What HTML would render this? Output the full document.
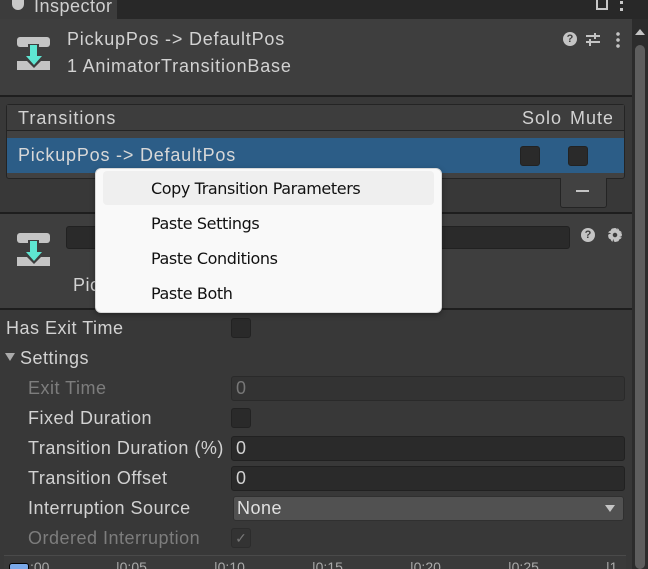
<!DOCTYPE html>
<html><head><style>
*{margin:0;padding:0;box-sizing:border-box}
html,body{width:648px;height:569px;overflow:hidden}
body{background:#383838;font-family:"Liberation Sans",sans-serif;color:#d2d2d2;position:relative;font-size:18px;letter-spacing:0.5px}
.a{position:absolute}
.t{position:absolute;white-space:nowrap}
.cb{position:absolute;width:20px;height:20px;background:#2a2a2a;border:1px solid #222;border-radius:3px}
.fld{position:absolute;background:#2a2a2a;border:1px solid #212121;border-radius:3px;height:25px}
.mi{position:absolute;left:151px;color:#111;font-size:16px;font-family:"DejaVu Sans","Liberation Sans",sans-serif;letter-spacing:-0.4px}
</style></head><body>
<div class="a" style="left:0;top:0;width:648px;height:19px;background:#282828"></div>
<div class="a" style="left:0;top:0;width:117px;height:19px;background:#3c3c3c"></div>
<div class="a" style="left:12px;top:0;width:12px;height:10px;background:#c8c8c8;border-radius:0 0 6px 6px"></div>
<div class="t" style="left:34px;top:-4px;font-size:18px;color:#d0d0d0">Inspector</div>
<div class="a" style="left:596px;top:0;width:12px;height:10px;border:2px solid #c8c8c8;border-top:none"></div>
<div class="a" style="left:620px;top:1px;width:3px;height:10px;border-top:3px solid #c8c8c8;border-bottom:3px solid #c8c8c8"></div>
<div class="a" style="left:0;top:19px;width:634px;height:78px;background:#3e3e3e;border-bottom:2px solid #1e1e1e"></div>
<svg class="a" style="left:15px;top:35px" width="38" height="38"><rect x="2" y="2" width="33" height="10" rx="3" fill="#c4c4c4"/><path d="M2 26h10l7 7 7-7h9v9H2z" fill="#c4c4c4"/><path d="M13 9h11v11h5l-10 12-10-12h4z" fill="#3e3e3e"/><path d="M15 10h7v11h5l-8 9-8-9h4z" fill="#5ee6d2"/></svg>
<div class="t" style="left:67px;top:29px;font-size:18px;letter-spacing:0.8px">PickupPos -&gt; DefaultPos</div>
<div class="t" style="left:67px;top:56px;font-size:18px;letter-spacing:0.8px">1 AnimatorTransitionBase</div>
<div class="a" style="left:563px;top:32px;width:14px;height:14px;border-radius:50%;background:#c4c4c4;color:#3e3e3e;font-size:11px;font-weight:bold;text-align:center;line-height:14px;letter-spacing:0">?</div>
<svg class="a" style="left:585px;top:31px" width="16" height="16"><path d="M1 5h14M1 11h14M10 2v6M5 8v7" stroke="#c4c4c4" stroke-width="2"/></svg>
<div class="a" style="left:616px;top:31px;width:4px;height:17px;background:radial-gradient(circle,#c4c4c4 1.6px,transparent 2px) 0 0/4px 6px"></div>
<div class="a" style="left:632px;top:19px;width:16px;height:550px;background:#2c2c2c"></div>
<div class="a" style="left:635px;top:45px;width:10px;height:524px;background:#5e5e5e;border-radius:5px"></div>
<div class="a" style="left:635px;top:29px;width:0;height:0;border-left:5px solid transparent;border-right:5px solid transparent;border-bottom:6px solid #c4c4c4"></div>
<div class="a" style="left:6px;top:104px;width:619px;height:75px;background:#414141;border:1px solid #242424;border-radius:3px"></div>
<div class="a" style="left:7px;top:105px;width:617px;height:26px;background:#3d3d3d;border-bottom:1px solid #232323"></div>
<div class="t" style="left:18px;top:108px;letter-spacing:1px">Transitions</div>
<div class="t" style="left:522px;top:108px;letter-spacing:1px">Solo</div>
<div class="t" style="left:570px;top:108px;width:42px;overflow:hidden;letter-spacing:1px">Mute</div>
<div class="a" style="left:7px;top:138px;width:617px;height:35px;background:#2c5d87"></div>
<div class="t" style="left:18px;top:145px;color:#d8d8d8;letter-spacing:0.8px">PickupPos -&gt; DefaultPos</div>
<div class="cb" style="left:520px;top:146px"></div>
<div class="cb" style="left:568px;top:146px"></div>
<div class="a" style="left:560px;top:178px;width:47px;height:30px;background:#414141;border:1px solid #242424;border-top:none;border-radius:0 0 3px 3px"></div>
<div class="a" style="left:576px;top:190px;width:13px;height:2px;background:#c4c4c4"></div>
<div class="a" style="left:0;top:212px;width:632px;height:2px;background:#1e1e1e"></div>
<div class="a" style="left:0;top:214px;width:632px;height:96px;background:#3e3e3e;border-bottom:2px solid #1e1e1e"></div>
<svg class="a" style="left:15px;top:231px" width="38" height="38"><rect x="2" y="2" width="33" height="10" rx="3" fill="#c4c4c4"/><path d="M2 26h10l7 7 7-7h9v9H2z" fill="#c4c4c4"/><path d="M13 9h11v11h5l-10 12-10-12h4z" fill="#3e3e3e"/><path d="M15 10h7v11h5l-8 9-8-9h4z" fill="#5ee6d2"/></svg>
<div class="fld" style="left:66px;top:226px;width:504px;height:23px"></div>
<div class="a" style="left:581px;top:228px;width:14px;height:14px;border-radius:50%;background:#c4c4c4;color:#3e3e3e;font-size:11px;font-weight:bold;text-align:center;line-height:14px;letter-spacing:0">?</div>
<div class="a" style="left:608px;top:228px;width:14px;height:14px;border-radius:50%;border:4px dotted #c4c4c4;background:radial-gradient(circle,#3e3e3e 2px,#c4c4c4 2.5px)"></div>
<div class="t" style="left:73px;top:275px">Pic</div>
<div class="t" style="left:6px;top:318px">Has Exit Time</div>
<div class="cb" style="left:231px;top:318px"></div>
<div class="a" style="left:5px;top:353px;width:0;height:0;border-left:5px solid transparent;border-right:5px solid transparent;border-top:8px solid #aaa"></div>
<div class="t" style="left:20px;top:348px">Settings</div>
<div class="t" style="left:28px;top:378px;color:#7d7d7d">Exit Time</div>
<div class="fld" style="left:231px;top:376px;width:394px;background:#333;border-color:#2a2a2a"></div>
<div class="t" style="left:236px;top:378px;color:#777">0</div>
<div class="t" style="left:28px;top:408px">Fixed Duration</div>
<div class="cb" style="left:231px;top:408px"></div>
<div class="t" style="left:28px;top:438px;width:198px;overflow:hidden">Transition Duration (%)</div>
<div class="fld" style="left:231px;top:436px;width:394px"></div>
<div class="t" style="left:236px;top:438px">0</div>
<div class="t" style="left:28px;top:468px">Transition Offset</div>
<div class="fld" style="left:231px;top:466px;width:394px"></div>
<div class="t" style="left:236px;top:468px">0</div>
<div class="t" style="left:28px;top:498px">Interruption Source</div>
<div class="a" style="left:233px;top:496px;width:391px;height:25px;background:#515151;border:1px solid #303030;border-radius:3px"></div>
<div class="t" style="left:237px;top:498px;color:#e0e0e0">None</div>
<div class="a" style="left:605px;top:505px;width:0;height:0;border-left:5px solid transparent;border-right:5px solid transparent;border-top:7px solid #c4c4c4"></div>
<div class="t" style="left:28px;top:528px;color:#7d7d7d">Ordered Interruption</div>
<div class="cb" style="left:231px;top:528px;background:#333;border-color:#2c2c2c;color:#777;font-size:14px;text-align:center;line-height:18px;letter-spacing:0">✓</div>
<div class="a" style="left:4px;top:555px;width:622px;height:14px;background:#3a3a3a;border-top:1px solid #4a4a4a"></div>
<div class="a" style="left:9px;top:563px;width:20px;height:8px;background:#7aa8e8;border:1px solid #000;border-radius:3px"></div>
<div class="t" style="left:30px;top:559px;font-size:14px;color:#aaa;letter-spacing:0">
<span class="t" style="left:0">:00</span><span class="t" style="left:86px">|0:05</span><span class="t" style="left:184px">|0:10</span><span class="t" style="left:282px">|0:15</span><span class="t" style="left:380px">|0:20</span><span class="t" style="left:478px">|0:25</span><span class="t" style="left:576px">|1</span></div>
<div class="a" style="left:95px;top:168px;width:347px;height:145px;background:#f9f9f9;border:1px solid #d8d8d8;border-radius:6px;box-shadow:0 2px 6px rgba(0,0,0,.35)"></div>
<div class="a" style="left:103px;top:171px;width:331px;height:34px;background:#efefef;border-radius:4px"></div>
<div class="mi" style="top:179px">Copy Transition Parameters</div>
<div class="mi" style="top:214px">Paste Settings</div>
<div class="mi" style="top:249px">Paste Conditions</div>
<div class="mi" style="top:284px">Paste Both</div>
</body></html>
